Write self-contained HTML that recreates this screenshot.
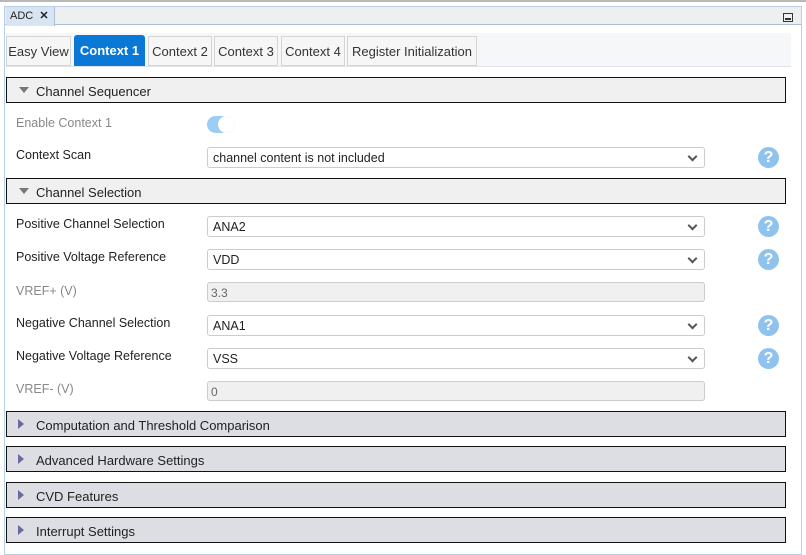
<!DOCTYPE html>
<html><head><style>
*{box-sizing:border-box;margin:0;padding:0}
body{width:806px;height:555px;background:#fff;font-family:"Liberation Sans",sans-serif;font-size:12.5px;color:#222;position:relative;overflow:hidden}
.a{position:absolute}
.sec{position:absolute;left:6px;width:780px;height:26px;border:1px solid #111;background:#f0f0f0;padding-left:29px;line-height:27px;font-size:13px}
.sec.c{background:#dcdee3}
.tri{position:absolute;left:12px;top:9px;width:0;height:0;border-left:5px solid transparent;border-right:5px solid transparent;border-top:6px solid #777}
.sec.c .tri{left:11px;top:7px;border-top:5px solid transparent;border-bottom:5px solid transparent;border-left:6px solid #6a6aa0;border-right:0}
.lbl{position:absolute;left:16px;font-size:12.5px}
.dis{color:#888}
.sel{position:absolute;left:207px;width:498px;height:21px;border:1px solid #ccc;border-radius:3px;background:#fff;padding-left:5px;line-height:21px;font-size:12.5px}
.sel:after{content:"";position:absolute;right:8px;top:5px;width:5px;height:5px;border-right:2px solid #555;border-bottom:2px solid #555;transform:rotate(45deg)}
.inp{position:absolute;left:207px;width:498px;height:20px;border:1px solid #ccc;border-radius:3px;background:#f0f0f0;padding-left:3px;line-height:20px;color:#666;font-size:12px}
.help{position:absolute;left:758px;width:21px;height:21px;border-radius:50%;background:#8fc3ee;color:#fff;font-weight:bold;font-size:16px;text-align:center;line-height:21px}
.tab{position:absolute;top:36px;height:30px;border:1px solid #d4d4d4;background:#f6f6f6;line-height:29px;text-align:center;font-size:13px;color:#333}
</style></head><body>
<div class="a" style="left:0;top:0;width:806px;height:2px;background:#b8b8b8"></div>
<div class="a" style="left:4px;top:6px;width:798px;height:549px;border:1px solid #b9cfe6;background:#fff"></div>
<div class="a" style="left:5px;top:7px;width:796px;height:18px;background:#efefef;border-bottom:1px solid #a9bfd6"></div>
<div class="a" style="left:6px;top:7px;width:49px;height:19px;background:#d7e4f2;border-right:1px solid #a9bfd6;font-size:11px;line-height:19px;padding-left:4px">ADC &nbsp;<b>✕</b></div>
<div class="a" style="left:783px;top:13px;width:10px;height:9px;border:1px solid #333"><div style="margin:4px 1px 0;height:2px;background:#333"></div></div>
<div class="a" style="left:6px;top:33px;width:785px;height:34px;background:#f6f7f9;border-bottom:1px solid #e0e3e8"></div>
<div class="tab" style="left:6px;width:65px">Easy View</div>
<div class="tab" style="left:74px;width:71px;top:35px;height:31px;background:#0a78d7;border-color:#0a78d7;color:#fff;font-weight:bold;font-size:13px;border-radius:3px 3px 0 0">Context 1</div>
<div class="tab" style="left:148px;width:64px">Context 2</div>
<div class="tab" style="left:214px;width:64px">Context 3</div>
<div class="tab" style="left:281px;width:64px">Context 4</div>
<div class="tab" style="left:347px;width:130px">Register Initialization</div>

<div class="sec" style="top:77px"><span class="tri"></span>Channel Sequencer</div>
<div class="lbl dis" style="top:116px">Enable Context 1</div>
<div class="a" style="left:207px;top:116px;width:28px;height:17px;border-radius:9px;background:#9ccdf5"><div style="position:absolute;right:0;top:0;width:17px;height:17px;border-radius:50%;background:#fff"></div></div>
<div class="lbl" style="top:148px">Context Scan</div>
<div class="sel" style="top:147px">channel content is not included</div>
<div class="help" style="top:147px">?</div>

<div class="sec" style="top:178px"><span class="tri"></span>Channel Selection</div>
<div class="lbl" style="top:217px">Positive Channel Selection</div>
<div class="sel" style="top:216px">ANA2</div><div class="help" style="top:216px">?</div>
<div class="lbl" style="top:250px">Positive Voltage Reference</div>
<div class="sel" style="top:249px">VDD</div><div class="help" style="top:249px">?</div>
<div class="lbl dis" style="top:284px">VREF+ (V)</div>
<div class="inp" style="top:282px">3.3</div>
<div class="lbl" style="top:316px">Negative Channel Selection</div>
<div class="sel" style="top:315px">ANA1</div><div class="help" style="top:315px">?</div>
<div class="lbl" style="top:349px">Negative Voltage Reference</div>
<div class="sel" style="top:348px">VSS</div><div class="help" style="top:348px">?</div>
<div class="lbl dis" style="top:382px">VREF- (V)</div>
<div class="inp" style="top:381px">0</div>

<div class="sec c" style="top:411px"><span class="tri"></span>Computation and Threshold Comparison</div>
<div class="sec c" style="top:446px"><span class="tri"></span>Advanced Hardware Settings</div>
<div class="sec c" style="top:482px"><span class="tri"></span>CVD Features</div>
<div class="sec c" style="top:517px"><span class="tri"></span>Interrupt Settings</div>
</body></html>
